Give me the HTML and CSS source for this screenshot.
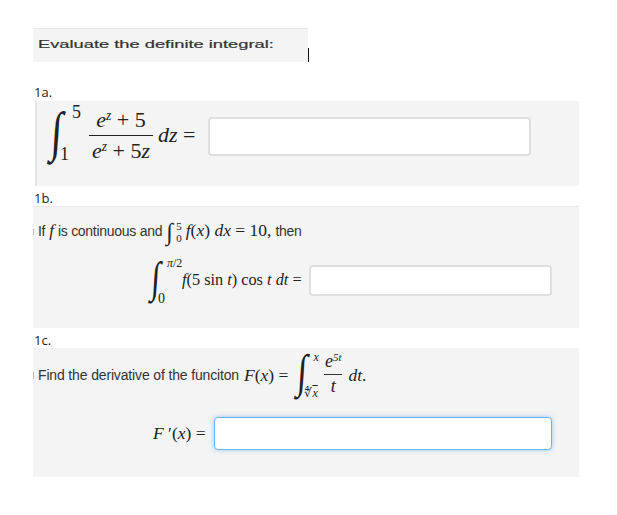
FILE: index.html
```html
<!DOCTYPE html>
<html lang="en">
<head>
<meta charset="utf-8">
<title>Evaluate the definite integral</title>
<link rel="stylesheet" href="styles.css">
</head>
<body>
<main class="page">
  <div class="head-row">
    <header class="heading"><span class="heading-text">Evaluate the definite integral:</span></header>
    <span class="cursor"></span>
  </div>

  <h2 class="label label-a">1a.</h2>
  <section class="panel panel-a">
    <div class="integral integral-a">
      <span class="sign">∫</span>
      <span class="limits"><span class="up">5</span><span class="low">1</span></span>
    </div>
    <div class="frac frac-a">
      <span class="num"><i>e<sup>z</sup></i> + 5</span>
      <span class="den"><i>e<sup>z</sup></i> + 5<i>z</i></span>
    </div>
    <span class="math after-a"><i>dz</i> =</span>
    <input class="answer answer-a" type="text" aria-label="Answer 1a">
  </section>

  <h2 class="label label-b">1b.</h2>
  <section class="panel panel-b">
    <p class="line line-b"><span class="tick"></span><span class="sans">If</span> <i class="math f">f</i> <span class="sans">is continuous and</span> <span class="inline-int"><span class="sign-sm">∫</span><span class="limits-sm"><span>5</span><span>0</span></span></span><span class="math m18"><i>f</i>(<i>x</i>) <i>dx</i> = 10,</span> <span class="sans">then</span></p>
    <div class="row row-b">
      <div class="integral integral-b">
        <span class="sign">∫</span>
        <span class="limits"><span class="up up-sm"><i>π</i>/2</span><span class="low">0</span></span>
      </div>
      <span class="math after-b"><i>f</i>(5 sin <i>t</i>) cos <i>t</i> <i>dt</i> =</span>
      <input class="answer answer-b" type="text" aria-label="Answer 1b">
    </div>
  </section>

  <h2 class="label label-c">1c.</h2>
  <section class="panel panel-c">
    <div class="line line-c"><span class="tick tick-c"></span><span class="sans">Find the derivative of the funciton</span>
      <span class="math fx"><i>F</i>(<i>x</i>) =</span>
      <div class="integral integral-c">
        <span class="sign">∫</span>
        <span class="limits"><span class="up up-sm"><i>x</i></span><span class="low low-sm">∜<span class="over"><i>x</i></span></span></span>
      </div>
      <div class="frac frac-c">
        <span class="num"><i>e<sup>5t</sup></i></span>
        <span class="den"><i>t</i></span>
      </div>
      <span class="math"><i>dt</i>.</span>
    </div>
    <div class="row row-c">
      <span class="math"><i>F</i> ′(<i>x</i>) =</span>
      <input class="answer answer-c" type="text" aria-label="Answer 1c">
    </div>
  </section>
</main>
</body>
</html>
```

FILE: styles.css
```css
* { box-sizing: border-box; }
html, body { margin: 0; padding: 0; background: #fff; }
body { width: 617px; height: 515px; overflow: hidden; color: #222; }
.page { padding: 28px 0 0 33px; width: 579px; }

.head-row { display: flex; }
.heading {
  width: 275px; height: 34px; background: #f4f4f4;
  border-top: 1px solid #e8e8e8; padding: 5px 0 0 5px;
}
.heading-text {
  display: inline-block; white-space: nowrap;
  font: 11.5px/14px "Liberation Sans", sans-serif; color: #333;
  -webkit-text-stroke: 0.2px #333;
  transform: scaleX(1.59); transform-origin: 0 50%;
}
.cursor { width: 1px; height: 14px; background: #111; margin-top: 20px; }

.label {
  margin: 0; font: 400 13px/16px "Open Sans", sans-serif; color: #222; padding-left: 1px;
}
.label-a { margin-top: 22px; height: 17px; }
.label-b { margin-top: 4px; height: 16px; }
.label-c { margin-top: 4px; height: 16px; }

.panel { background: #f4f4f4; width: 546px; }
.panel-a {
  margin-left: 2px; width: 544px; height: 85px; border-left: 2px solid #e4e4e4;
  display: flex; align-items: flex-start; padding: 5px 0 0 9px;
}
.panel-b { height: 122px; border-top: 1px solid #e8e8e8; padding: 12px 0 0 0; }
.panel-c { height: 129px; padding: 0; }

.math, .num, .den { font-family: "Liberation Serif", serif; color: #222; }
.math { font-size: 17.5px; white-space: nowrap; }
.m18 { font-size: 17.5px; }
.sans { font: 14px "Liberation Sans", sans-serif; letter-spacing: -0.15px; color: #333; }
.line-b .sans { letter-spacing: -0.28px; }
sup { font-size: 0.62em; line-height: 0; vertical-align: 0.55em; }

.integral { display: flex; font-family: "Liberation Serif", serif; }
.sign {
  font: 48px/52px "Liberation Serif", serif; width: 17px; color: #222;
  transform: translate(2px, -2px) scale(0.85, 1.14) skewX(-5deg);
}
.limits { display: flex; flex-direction: column; justify-content: space-between; height: 53px; }
.up { margin-left: 7px; margin-top: -3px; line-height: 14px; }
.low { margin-left: -5px; line-height: 14px; }
.integral-a .limits { font-size: 18px; }
.up-sm { font-size: 12px; }
.low-sm { font-size: 12px; }
.over { text-decoration: overline; }

.frac { display: flex; flex-direction: column; align-items: center; }
.frac .num { line-height: 24px; padding-bottom: 3px; white-space: nowrap; }
.frac .den { line-height: 24px; border-top: 1px solid #222; padding-top: 3px; align-self: stretch; text-align: center; white-space: nowrap; }

.integral-a { margin: 2px 0 0 2px; }
.frac-a { margin: 2px 0 0 8px; width: 64px; font-size: 22px; }
.after-a { margin: 16px 0 0 5px; font-size: 22px; line-height: 25px; }
.answer {
  background: #fff; border: 2px solid #dfdfdf; border-radius: 4px; outline: none; padding: 0; margin: 0;
}
.answer-a { width: 323px; height: 39px; margin: 11px 0 0 13px; }

.line { margin: 0; display: flex; align-items: center; white-space: nowrap; }
.line-b { display: block; height: 22px; line-height: 22px; }
.tick { width: 1px; height: 6px; background: #bbb; margin-right: 4px; }
.line-b .tick { display: inline-block; vertical-align: middle; }
.f { font-size: 17px; }
.inline-int { display: inline-flex; align-items: center; vertical-align: middle; height: 22px; }
.sign-sm { font: 24px/22px "Liberation Serif", serif; width: 10px; color: #222; }
.limits-sm { display: flex; flex-direction: column; font: 11px/12px "Liberation Serif", serif; color: #222; margin-right: 4px; }

.row { display: flex; }
.row-b { margin: 19px 0 0 115px; }
.integral-b .sign { font-size: 38px; line-height: 40px; }
.integral-b .limits { width: 17px; height: 46px; }
.integral-b .low { margin-left: -7px; font-size: 14px; }
.integral-b .up { margin-left: 2px; margin-top: -4px; }
.after-b { margin-top: 10px; font-size: 16.3px; line-height: 20px; }
.answer-b { width: 243px; height: 31px; margin: 5px 0 0 7px; }

.line-c { height: 54px; }
.tick-c { height: 7px; }
.line-c .sans { margin-right: 5px; }
.fx { margin-right: 6px; }
.integral-c .sign { font-size: 41px; line-height: 45px; }
.integral-c .limits { width: 12px; height: 49px; }
.integral-c .up { margin-left: 2px; margin-top: -1px; }
.integral-c .low { margin-left: -7px; white-space: nowrap; }
.frac-c { width: 18px; margin: 0 6px 0 1px; font-size: 18px; }
.frac-c .num { line-height: 20px; margin-top: -3px; }
.frac-c .den { line-height: 20px; padding-top: 1px; border-top-color: #333; }

.row-c { margin: 15px 0 0 120px; align-items: center; }
.answer-c {
  width: 338px; height: 33px; margin-left: 8px;
  border: 1.5px solid #6db5f2; box-shadow: 0 0 5px rgba(109, 181, 242, 0.7);
}
```
